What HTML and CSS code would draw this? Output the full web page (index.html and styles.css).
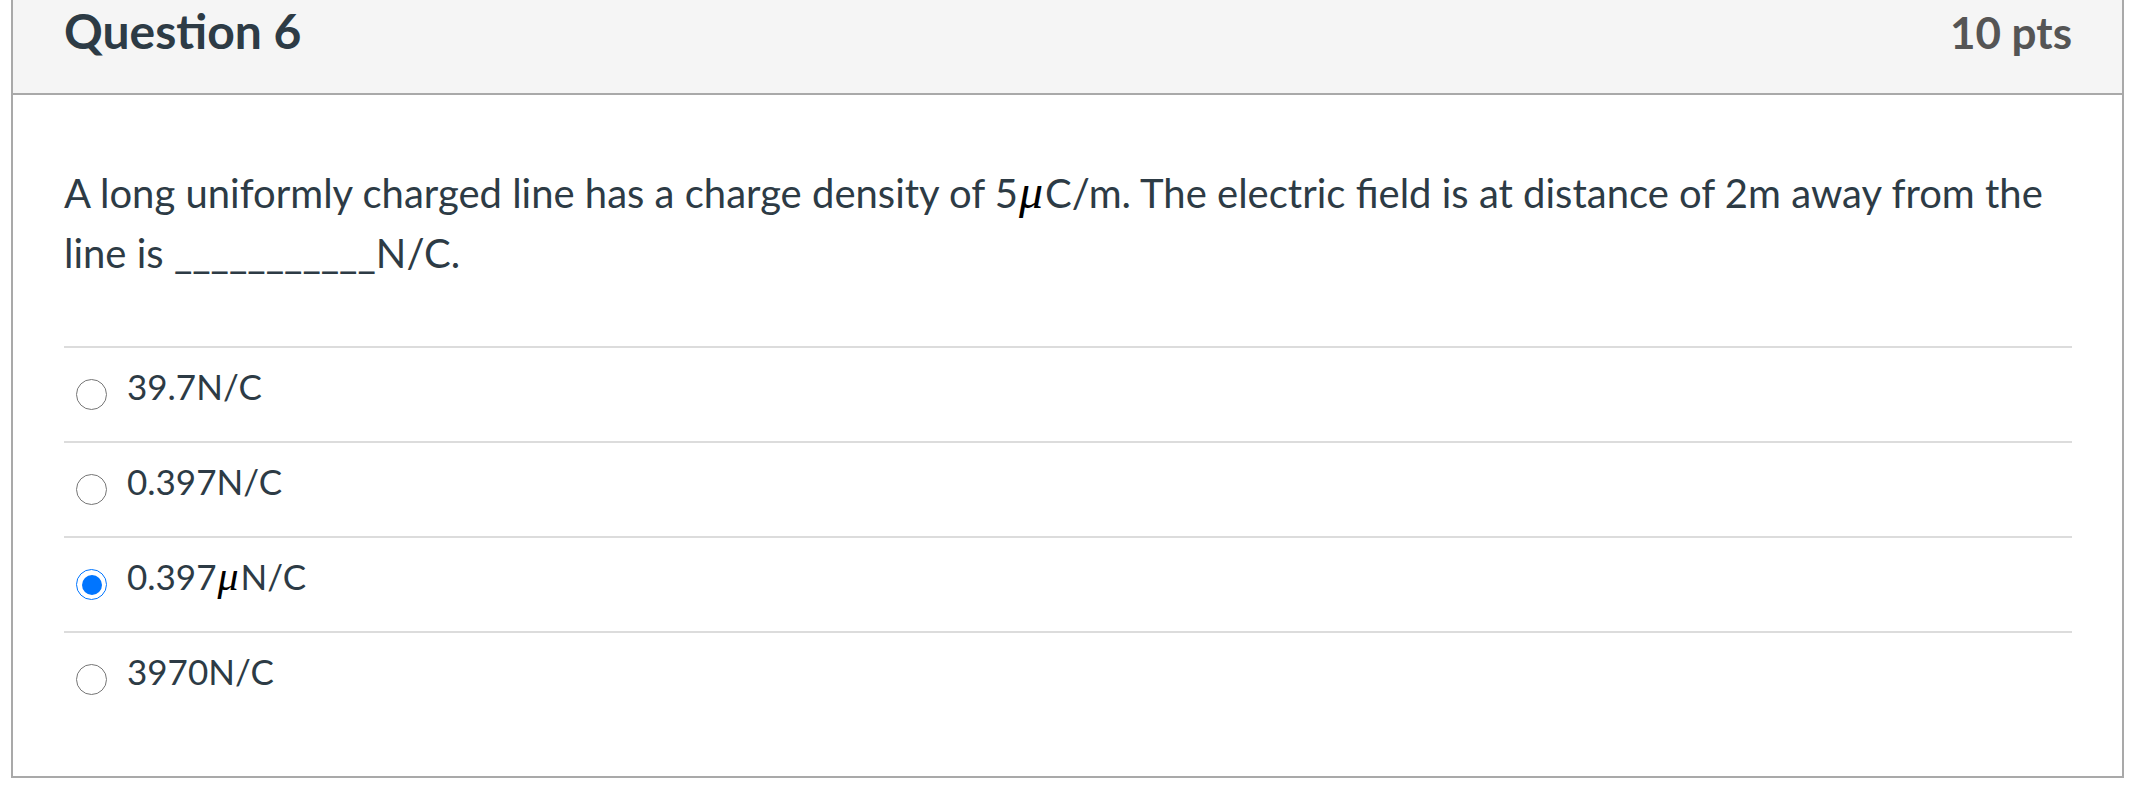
FILE: index.html
```html
<!DOCTYPE html>
<html lang="en">
<head>
<meta charset="utf-8">
<title>Question 6</title>
<link rel="stylesheet" href="styles.css">
</head>
<body>
<div class="question">
  <div class="q-header">
    <h2 class="q-title">Question 6</h2>
    <div class="q-points">10 pts</div>
  </div>
  <div class="q-body">
    <p class="q-text">A long uniformly charged line has a charge density of 5<span class="mu">μ</span>C/m. The electric field is at distance of 2m away from the line is ___________N/C.</p>
    <div class="answers">
      <div class="answer">
        <span class="radio"></span>
        <span class="label">39.7N/C</span>
      </div>
      <div class="answer">
        <span class="radio"></span>
        <span class="label">0.397N/C</span>
      </div>
      <div class="answer">
        <span class="radio checked"><span class="dot"></span></span>
        <span class="label">0.397<span class="mu">μ</span>N/C</span>
      </div>
      <div class="answer">
        <span class="radio"></span>
        <span class="label">3970N/C</span>
      </div>
    </div>
  </div>
</div>
</body>
</html>
```

FILE: styles.css
```css
html, body {
  margin: 0;
  padding: 0;
  background: #ffffff;
}

body {
  font-family: Lato, "Noto Sans", sans-serif;
  color: #2d3b45;
}

.question {
  margin: 0 11px 0 11px;
  border-left: 2px solid #a9a9a9;
  border-right: 2px solid #a9a9a9;
  border-bottom: 2px solid #a9a9a9;
}

.q-header {
  display: flex;
  justify-content: space-between;
  align-items: baseline;
  background: #f5f5f5;
  border-bottom: 2px solid #a9a9a9;
  padding: 2px 50px 32px 51px;
}

.q-title {
  margin: 0;
  font-size: 48px;
  line-height: 58px;
  font-weight: 700;
  color: #2d3b45;
}

.q-points {
  font-size: 44px;
  line-height: 58px;
  font-weight: 700;
  color: #555555;
}

.q-body {
  padding: 68px 50px 50px 51px;
}

.q-text {
  margin: 0 0 63px 0;
  font-size: 40px;
  line-height: 60px;
}

.mu {
  font-family: "Liberation Serif", "DejaVu Serif", serif;
  font-style: italic;
  color: #000000;
  font-size: 1.2em;
  line-height: 1;
  padding: 0 2px 0 1px;
}

.answer {
  display: flex;
  align-items: center;
  height: 93px;
  border-top: 2px solid #dcdcdc;
  padding-left: 12px;
}

.radio {
  box-sizing: border-box;
  width: 31px;
  height: 31px;
  border-radius: 50%;
  border: 1px solid #767676;
  background: #ffffff;
  display: flex;
  align-items: center;
  justify-content: center;
  margin-right: 20px;
  flex: none;
}

.radio.checked {
  border: 1.5px solid #0075ff;
}

.dot {
  width: 20px;
  height: 20px;
  border-radius: 50%;
  background: #0075ff;
}

.label {
  font-size: 35px;
  line-height: 40px;
  position: relative;
  top: -9px;
}
```
